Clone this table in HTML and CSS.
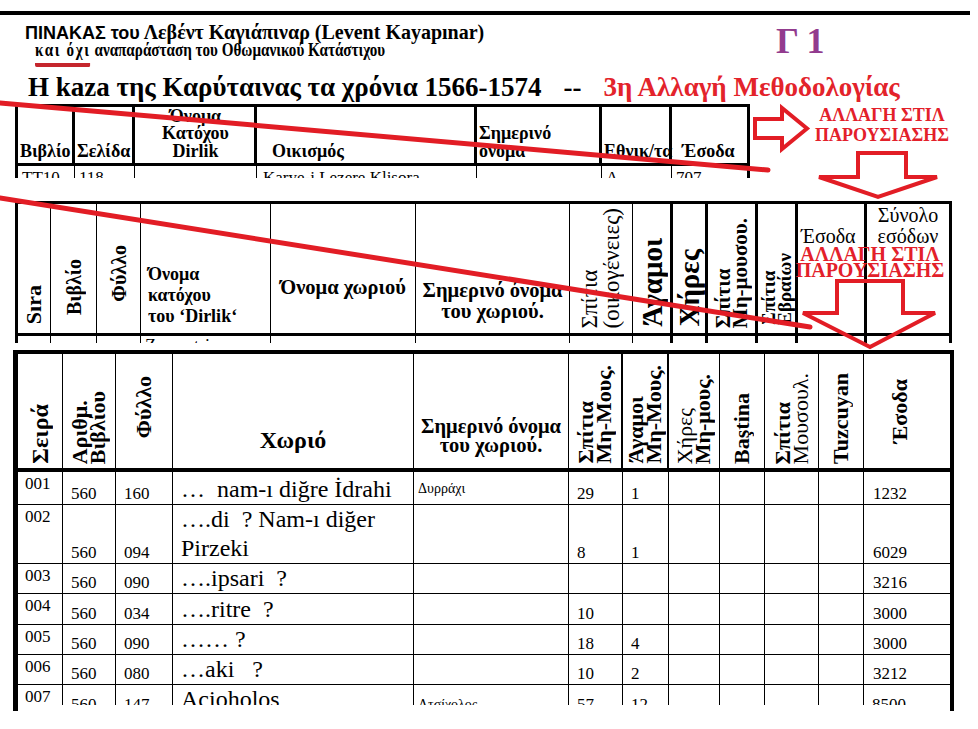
FILE: index.html
```html
<!DOCTYPE html>
<html lang="el">
<head>
<meta charset="utf-8">
<title>Πίνακας – Η kaza της Καρύταινας</title>
<link rel="stylesheet" href="styles.css">
</head>
<body>
<div class="page">
  <div class="rule"></div>

  <div class="head-row">
    <div class="head-left">
      <div class="l1"><span class="sans">ΠΙΝΑΚΑΣ του</span> Λεβέντ Καγιάπιναρ (Levent Kayapınar)</div>
      <div class="l2"><span class="ul">και όχι</span> αναπαράσταση του Οθωμανικού Κατάστιχου</div>
    </div>
    <div class="gamma">Γ 1</div>
  </div>

  <div class="l3">Η kaza της Καρύταινας τα χρόνια 1566-1574<span class="dash">--</span><span class="red">3η Αλλαγή Μεθοδολογίας</span></div>

  <!-- Table 1 -->
  <div class="clip t1clip">
    <table class="t1">
      <tr class="hd">
        <th class="a1">Βιβλίο</th>
        <th class="a2">Σελίδα</th>
        <th class="a3 ctr">Όνομα<br>Κατόχου<br>Dirlik</th>
        <th class="a4 oik">Οικισμός</th>
        <th class="a5">Σημερινό<br>όνομα</th>
        <th class="a6">Εθνικ/τα</th>
        <th class="a7 eso">Έσοδα</th>
      </tr>
      <tr class="bd">
        <td>TT10</td>
        <td>118</td>
        <td></td>
        <td class="oik">Karye-i Lezere Klisora</td>
        <td></td>
        <td>A</td>
        <td class="eso">707</td>
      </tr>
    </table>
  </div>

  <!-- Table 2 -->
  <div class="clip t2clip">
    <table class="t2">
      <tr class="hd">
        <th class="b1 thin"><span class="vt sira">Sıra</span></th>
        <th class="b2 thin"><span class="vt bib">Βιβλίο</span></th>
        <th class="b3 thin"><span class="vt fyl">Φύλλο</span></th>
        <th class="b4 thin own">Όνομα<br>κατόχου<br>του ‘Dirlik‘</th>
        <th class="b5 thin xor">Όνομα χωριού</th>
        <th class="b6 thin sim">Σημερινό όνομα<br>του χωριού.</th>
        <th class="b7 thin"><span class="vt spo">Σπίτια<br>(οικογένειες)</span></th>
        <th class="b8 thick"><span class="vt big">Άγαμοι</span></th>
        <th class="b9 thick"><span class="vt big">Χήρες</span></th>
        <th class="b10 thick"><span class="vt smu">Σπίτια<br>Μη-μουσου.</span></th>
        <th class="b11 thick"><span class="vt sev">Σπίτια<br>Εβραίων</span></th>
        <th class="b12 thick top eso2">Έσοδα</th>
        <th class="b13 thick top syn">Σύνολο<br>εσόδων</th>
      </tr>
      <tr class="bd">
        <td class="thin"></td>
        <td class="thin"></td>
        <td class="thin"></td>
        <td class="thin">Zeamet-i</td>
        <td class="thin"></td>
        <td class="thin"></td>
        <td class="thin"></td>
        <td class="thick"></td>
        <td class="thick"></td>
        <td class="thick"></td>
        <td class="thick"></td>
        <td class="thick"></td>
        <td class="thick"></td>
      </tr>
    </table>
  </div>

  <!-- Table 3 -->
  <div class="clip t3clip">
    <table class="t3">
      <tr class="hd">
        <th class="c1"><span class="vt v24">Σειρά</span></th>
        <th class="c2"><span class="vt v22 two">Αριθμ.<br>Βιβλίου</span></th>
        <th class="c3 fyl3"><span class="vt v22">Φύλλο</span></th>
        <th class="c4 xwr">Χωριό</th>
        <th class="c5 sim3">Σημερινό όνομα<br>του χωριού.</th>
        <th class="c6 w2"><span class="vt v22 two">Σπίτια<br>Μη-Μους.</span></th>
        <th class="c7 w2"><span class="vt v22 two">Άγαμοι<br>Μη-Μους.</span></th>
        <th class="c8"><span class="vt v22 two"><span class="reg">Χήρες</span><br>Μη-μους.</span></th>
        <th class="c9"><span class="vt v22">Baştina</span></th>
        <th class="c10"><span class="vt v22 two">Σπίτια<br><span class="reg">Μουσουλ.</span></span></th>
        <th class="c11"><span class="vt v22">Tuzcuyan</span></th>
        <th class="c12 mid"><span class="vt v22">Έσοδα</span></th>
      </tr>
      <tr class="r1">
        <td class="no">001</td><td class="n">560</td><td class="n">160</td>
        <td class="vil">…&nbsp; nam-ı diğre İdrahi</td><td class="mod">Δυρράχι</td>
        <td class="n">29</td><td class="n">1</td><td></td><td></td><td></td><td></td><td class="n sum">1232</td>
      </tr>
      <tr class="r2">
        <td class="no">002</td><td class="n">560</td><td class="n">094</td>
        <td class="vil">….di&nbsp; ? Nam-ı diğer<br>Pirzeki</td><td class="mod"></td>
        <td class="n">8</td><td class="n">1</td><td></td><td></td><td></td><td></td><td class="n sum">6029</td>
      </tr>
      <tr class="r3">
        <td class="no">003</td><td class="n">560</td><td class="n">090</td>
        <td class="vil">….ipsari&nbsp; ?</td><td class="mod"></td>
        <td class="n"></td><td class="n"></td><td></td><td></td><td></td><td></td><td class="n sum">3216</td>
      </tr>
      <tr class="r4">
        <td class="no">004</td><td class="n">560</td><td class="n">034</td>
        <td class="vil">….ritre&nbsp; ?</td><td class="mod"></td>
        <td class="n">10</td><td class="n"></td><td></td><td></td><td></td><td></td><td class="n sum">3000</td>
      </tr>
      <tr class="r5">
        <td class="no">005</td><td class="n">560</td><td class="n">090</td>
        <td class="vil">…… ?</td><td class="mod"></td>
        <td class="n">18</td><td class="n">4</td><td></td><td></td><td></td><td></td><td class="n sum">3000</td>
      </tr>
      <tr class="r6">
        <td class="no">006</td><td class="n">560</td><td class="n">080</td>
        <td class="vil">…aki&nbsp;&nbsp; ?</td><td class="mod"></td>
        <td class="n">10</td><td class="n">2</td><td></td><td></td><td></td><td></td><td class="n sum">3212</td>
      </tr>
      <tr class="r7">
        <td class="no">007</td><td class="n7">560</td><td class="n7">147</td>
        <td class="vil7">Acioholos</td><td class="mod7">Ατσίχολος</td>
        <td class="n7">57</td><td class="n7">12</td><td></td><td></td><td></td><td></td><td class="n7 sum">8500</td>
      </tr>
    </table>
  </div>
  <div class="t3tail"></div>

  <!-- red annotations drawn over the document -->
  <svg class="marks" width="978" height="729" viewBox="0 0 978 729">
    <line x1="0" y1="103" x2="768" y2="170" />
    <line x1="0" y1="198" x2="810" y2="327" />
    <polygon points="755,119 782,119 782,108 807,128.5 782,149 782,138 755,138" />
    <polygon points="858,153 906,153 906,177 937,177 878,197 819,177 858,177" />
    <polygon points="837,281 903,281 903,313 935,313 870,347 803,313 837,313" />
  </svg>
  <div class="note n1">ΑΛΛΑΓΗ ΣΤΙΛ<br>ΠΑΡΟΥΣΙΑΣΗΣ</div>
  <div class="note n2">ΑΛΛΑΓΗ ΣΤΙΛ<br>ΠΑΡΟΥΣΙΑΣΗΣ</div>
</div>
</body>
</html>
```

FILE: styles.css
```css
html, body {
  margin: 0;
  padding: 0;
  background: #ffffff;
}

.page {
  position: relative;
  width: 978px;
  height: 729px;
  overflow: hidden;
  background: #ffffff;
  color: #000;
  font-family: "Liberation Serif", "DejaVu Serif", serif;
}

.rule {
  margin-top: 11px;
  width: 970px;
  height: 4px;
  background: #000;
}

/* ---------- title block ---------- */
.head-row {
  display: flex;
  align-items: flex-start;
  padding-top: 8px;
  height: 36px;
}

.head-left {
  padding-left: 25px;
  width: 751px;
}

.l1 {
  margin-top: 2px;
  font-weight: bold;
  font-size: 20px;
  line-height: 14px;
  white-space: nowrap;
}

.sans {
  font-family: "Liberation Sans", Arial, sans-serif;
  font-size: 18px;
}

/* the scanned second line is slightly condensed */
.l2 {
  margin-top: 4px;
  margin-left: 10px;
  width: 420px;
  font-weight: bold;
  font-size: 18px;
  line-height: 12px;
  white-space: nowrap;
  transform: scaleX(0.84);
  transform-origin: 0 50%;
}

.ul {
  display: inline-block;
  letter-spacing: 2px;
  line-height: 12px;
  padding-bottom: 7px;
  border-bottom: 4px solid #c5262d;
  border-radius: 2px;
  vertical-align: baseline;
}

.gamma {
  font-weight: bold;
  font-size: 36px;
  line-height: 36px;
  color: #923b8e;
  white-space: nowrap;
}

.l3 {
  margin-top: 13px;
  padding-left: 28px;
  font-weight: bold;
  font-size: 27px;
  line-height: 30px;
  white-space: nowrap;
}

.dash {
  margin: 0 22px 0 22px;
}

.red {
  color: #e3232b;
}

/* ---------- generic tables ---------- */
.clip {
  overflow: hidden;
}

table {
  border-spacing: 0;
  table-layout: fixed;
}

th, td {
  box-sizing: border-box;
  padding: 0;
  overflow: visible;
  white-space: nowrap;
}

.vt {
  display: inline-block;
  writing-mode: vertical-rl;
  transform: rotate(180deg);
  text-align: start;
  white-space: nowrap;
  vertical-align: bottom;
}

/* ---------- table 1 ---------- */
.t1clip {
  margin-top: 2px;
  margin-left: 15px;
  width: 740px;
  height: 74px;
}

.t1 {
  width: 735px;
  border-top: 3px solid #000;
  border-left: 3px solid #000;
}

.t1 .hd th {
  height: 59px;
  border-right: 3px solid #000;
  border-bottom: 3px solid #000;
  vertical-align: bottom;
  text-align: left;
  font-weight: bold;
  font-size: 18px;
  line-height: 17.5px;
  padding: 0 0 3px 2px;
}

.t1 .hd th.ctr { text-align: center; }
.t1 .hd th.oik { padding-left: 15px; }
.t1 .hd th.eso { padding-left: 10px; }

.t1 .a1 { width: 57px; }
.t1 .a2 { width: 60px; }
.t1 .a3 { width: 122px; }
.t1 .a4 { width: 220px; }
.t1 .a5 { width: 125px; padding-left: 6px; }
.t1 .a6 { width: 70px; }
.t1 .a7 { width: 78px; }

.t1 .bd td {
  border-right: 1px solid #000;
  vertical-align: top;
  font-size: 17px;
  line-height: 20px;
  padding: 2px 0 0 4px;
  height: 30px;
}

.t1 .bd td:last-child { border-right: 3px solid #000; }
.t1 .bd td.oik { padding-left: 6px; }
.t1 .bd td.eso { padding-left: 4px; }

/* ---------- table 2 ---------- */
.t2clip {
  margin-top: 23px;
  margin-left: 15px;
  width: 940px;
  height: 142px;
}

.t2 {
  width: 937px;
  border-top: 3px solid #000;
  border-left: 3px solid #000;
}

.t2 .hd th {
  height: 132px;
  border-bottom: 3px solid #000;
  vertical-align: bottom;
  text-align: center;
  font-weight: bold;
  line-height: 0;
}

.t2 .thin { border-right: 1px solid #000; }
.t2 .thick { border-right: 3px solid #000; }
.t2 .b13 { border-right: 3px solid #000; }

.t2 .b1 { width: 33px; padding-bottom: 9px; }
.t2 .b2 { width: 46px; padding-bottom: 18px; }
.t2 .b3 { width: 44px; padding-bottom: 31px; }
.t2 .b4 { width: 130px; }
.t2 .b5 { width: 145px; }
.t2 .b6 { width: 154px; }
.t2 .b7 { width: 63px; padding-bottom: 5px; }
.t2 .b8 { width: 40px; padding-bottom: 6px; }
.t2 .b9 { width: 35px; padding-bottom: 6px; }
.t2 .b10 { width: 50px; padding-bottom: 5px; }
.t2 .b11 { width: 40px; padding-bottom: 8px; }
.t2 .b12 { width: 69px; }
.t2 .b13 { width: 85px; }

.t2 .sira { font-size: 22px; line-height: 22px; }
.t2 .bib { font-size: 20px; line-height: 20px; }
.t2 .fyl { font-size: 20px; line-height: 20px; }
.t2 .spo { font-size: 23px; line-height: 22px; font-weight: normal; }
.t2 .big { font-size: 29px; line-height: 28px; }
.t2 .smu { font-size: 21px; line-height: 17px; }
.t2 .sev { font-size: 19px; line-height: 16px; }

.t2 .hd th.own {
  text-align: left;
  padding: 0 0 6px 7px;
  font-size: 18px;
  line-height: 21px;
}

.t2 .hd th.xor {
  text-align: center;
  padding: 0 0 35px 0;
  font-size: 20.5px;
  line-height: 21px;
}

.t2 .hd th.sim {
  text-align: center;
  padding: 0 0 11px 0;
  font-size: 20.5px;
  line-height: 21px;
}

.t2 .hd th.top {
  vertical-align: top;
  font-weight: normal;
  font-size: 20px;
  line-height: 21px;
}

.t2 .hd th.eso2 { padding-top: 22px; text-align: left; padding-left: 3px; }
.t2 .hd th.syn { padding-top: 1px; }

.t2 .bd td {
  height: 20px;
  vertical-align: top;
  font-size: 18px;
  line-height: 20px;
  padding: 0 0 0 4px;
}

/* ---------- table 3 ---------- */
.t3clip {
  margin-top: 7px;
  margin-left: 13px;
  width: 945px;
  height: 355px;
}

.t3 {
  width: 941px;
  border-top: 4px solid #000;
  border-left: 5px solid #000;
}

.t3 th, .t3 td {
  border-right: 1px solid #000;
}

.t3 th:last-child, .t3 td:last-child {
  border-right: 4px solid #000;
}

.t3 .hd th {
  height: 118px;
  border-bottom: 4px solid #000;
  vertical-align: bottom;
  text-align: center;
  font-weight: bold;
  line-height: 0;
  padding-bottom: 4px;
}

.t3 .hd th.w2 { border-right-width: 2px; }

.t3 .c1 { width: 45px; }
.t3 .c2 { width: 53px; }
.t3 .c3 { width: 57px; }
.t3 .c4 { width: 241px; }
.t3 .c5 { width: 155px; }
.t3 .c6 { width: 54px; }
.t3 .c7 { width: 46px; }
.t3 .c8 { width: 51px; }
.t3 .c9 { width: 45px; }
.t3 .c10 { width: 54px; }
.t3 .c11 { width: 45px; }
.t3 .c12 { width: 90px; }

.t3 .v24 { font-size: 24px; line-height: 24px; }
.t3 .v22 { font-size: 22px; line-height: 22px; }
.t3 .two { line-height: 18px; }
.t3 .reg { font-weight: normal; }

.t3 .hd th.fyl3 { padding-bottom: 30px; }
.t3 .hd th.mid { vertical-align: middle; padding: 0 14px 0 0; }

.t3 .hd th.xwr {
  font-size: 24px;
  line-height: 24px;
  padding-bottom: 16px;
}

.t3 .hd th.sim3 {
  font-size: 20.5px;
  line-height: 19px;
  padding-bottom: 13px;
}

.t3 td {
  border-bottom: 1px solid #000;
  vertical-align: bottom;
  font-size: 17px;
  line-height: 18px;
}

.t3 .r1 td { height: 33px; }
.t3 .r2 td { height: 59px; }
.t3 .r3 td { height: 30px; }
.t3 .r4 td { height: 31px; }
.t3 .r5 td { height: 30px; }
.t3 .r6 td { height: 30px; }
.t3 .r7 td { height: 30px; }

.t3 td.no {
  vertical-align: top;
  padding: 3px 0 0 7px;
}

.t3 td.n {
  padding: 0 0 1px 8px;
}

.t3 td.sum { padding-left: 9px; }

.t3 td.vil {
  font-size: 24px;
  line-height: 29px;
  padding: 0 0 0 8px;
}

.t3 td.mod {
  vertical-align: top;
  font-size: 14px;
  line-height: 15px;
  padding: 9px 0 0 4px;
}

.t3 .r7 td { vertical-align: top; }
.t3 td.n7 { padding: 11px 0 0 8px; }
.t3 td.vil7 { font-size: 24px; line-height: 28px; padding: 0 0 0 8px; }
.t3 td.mod7 { font-size: 14px; line-height: 15px; padding: 12px 0 0 4px; }

.t3tail {
  margin-left: 13px;
  width: 932px;
  height: 6px;
  border-left: 5px solid #000;
  border-right: 4px solid #000;
}

/* ---------- red annotations ---------- */
.marks {
  position: absolute;
  left: 0;
  top: 0;
  pointer-events: none;
}

.marks line {
  stroke: #e21d25;
  stroke-width: 5;
  stroke-linecap: round;
}

.marks polygon {
  fill: none;
  stroke: #e21d25;
  stroke-width: 4;
  stroke-linejoin: miter;
}

.note {
  position: absolute;
  color: #e3202a;
  font-weight: bold;
  text-align: center;
  white-space: nowrap;
}

.n1 {
  left: 812px;
  top: 105px;
  width: 140px;
  font-size: 18px;
  line-height: 20px;
}

.n2 {
  left: 795px;
  top: 246px;
  width: 150px;
  font-size: 20px;
  line-height: 16px;
}
```
